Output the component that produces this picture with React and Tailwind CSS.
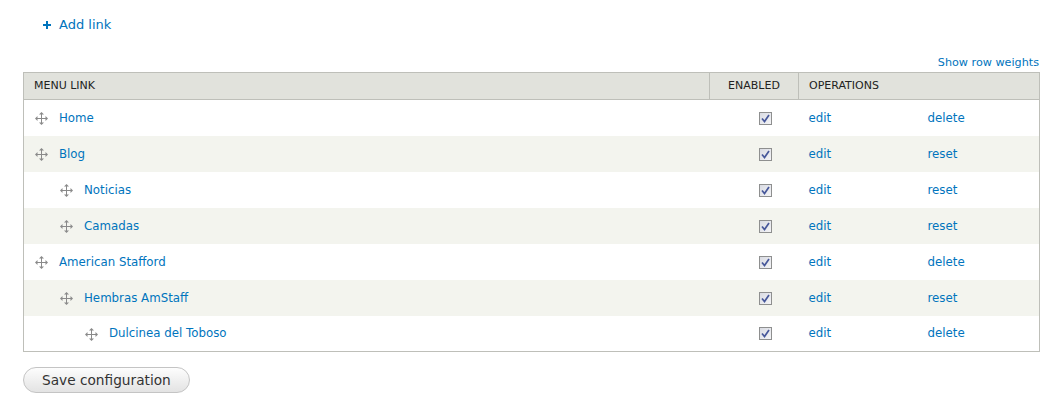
import React from 'react';

const rows = [
  { id: 1, title: 'Home', depth: 0, op: 'delete' },
  { id: 2, title: 'Blog', depth: 0, op: 'reset' },
  { id: 3, title: 'Noticias', depth: 1, op: 'reset' },
  { id: 4, title: 'Camadas', depth: 1, op: 'reset' },
  { id: 5, title: 'American Stafford', depth: 0, op: 'delete' },
  { id: 6, title: 'Hembras AmStaff', depth: 1, op: 'reset' },
  { id: 7, title: 'Dulcinea del Toboso', depth: 2, op: 'delete' },
];

const indent = ['pl-[11px]', 'pl-[36px]', 'pl-[61px]'];

function DragHandle() {
  return (
    <svg width="13" height="13" viewBox="0 0 13 13" className="shrink-0">
      <g fill="#8a8a8a">
        <rect x="6" y="2" width="1" height="9" />
        <rect x="2" y="6" width="9" height="1" />
        <path d="M6.5 0 L9 2.5 H4 Z" />
        <path d="M6.5 13 L9 10.5 H4 Z" />
        <path d="M0 6.5 L2.5 4 V9 Z" />
        <path d="M13 6.5 L10.5 4 V9 Z" />
      </g>
    </svg>
  );
}

function Checkbox() {
  return (
    <span className="inline-flex h-[13px] w-[13px] items-center justify-center border border-[#8e8f8f] bg-gradient-to-br from-[#d9dbe3] to-[#f4f4f6] align-middle">
      <svg width="9" height="9" viewBox="0 0 9 9">
        <path d="M1 4.5 L3.5 7.5 L8 1" fill="none" stroke="#46579a" strokeWidth="1.7" />
      </svg>
    </span>
  );
}

export default function App() {
  return (
    <div className="h-[410px] w-[1060px] bg-white pl-[23px] pr-[21px] pt-[16px] font-['DejaVu_Sans',Verdana,sans-serif] text-[11.8px] text-[#333]">
      {/* 添加链接 */}
      <div className="flex h-[18px] items-center pl-[20px]">
        <svg width="8" height="8" viewBox="0 0 8 8" className="mr-[8px]">
          <path d="M3 0 H5 V3 H8 V5 H5 V8 H3 V5 H0 V3 H3 Z" fill="#0074bd" />
        </svg>
        <a className="text-[13px] text-[#0074bd]">Add link</a>
      </div>

      <div className="mt-[21px] flex h-[16px] items-center justify-end">
        <a className="text-[11.2px] text-[#0074bd]">Show row weights</a>
      </div>

      {/* 菜单表格 */}
      <table className="mt-[1px] w-[1017px] table-fixed border-collapse border border-[#bebfb9]">
        <colgroup>
          <col className="w-[686px]" />
          <col className="w-[89px]" />
          <col className="w-[119px]" />
          <col />
        </colgroup>
        <thead>
          <tr className="h-[27px] bg-[#e1e2dc] text-[11px] uppercase text-[#222]">
            <th className="border-b border-r border-[#bebfb9] pl-[10px] pt-[1px] text-left font-normal">Menu link</th>
            <th className="border-b border-r border-[#bebfb9] pt-[1px] text-center font-normal">Enabled</th>
            <th colSpan={2} className="border-b border-[#bebfb9] pl-[10px] pt-[1px] text-left font-normal">Operations</th>
          </tr>
        </thead>
        <tbody>
          {rows.map((row, i) => (
            <tr key={row.id} className={`h-[36px] ${i % 2 === 1 ? 'bg-[#f3f4ee]' : 'bg-white'}`}>
              <td className={`${indent[row.depth]} pt-[2px]`}>
                <div className="flex items-center gap-[11px]">
                  <DragHandle />
                  <a className="text-[#0074bd]">{row.title}</a>
                </div>
              </td>
              <td className="pl-[23px] pt-[2px] text-center">
                <Checkbox />
              </td>
              <td className="pl-[10px] pt-[2px]">
                <a className="text-[#0074bd]">edit</a>
              </td>
              <td className="pl-[10px] pt-[2px]">
                <a className="text-[#0074bd]">{row.op}</a>
              </td>
            </tr>
          ))}
        </tbody>
      </table>

      <button className="mt-[15px] h-[26px] rounded-full border border-[#c4c4c4] bg-gradient-to-b from-[#fdfdfd] to-[#e3e3e3] px-[18px] text-[13.7px] text-[#333]">
        Save configuration
      </button>
    </div>
  );
}
